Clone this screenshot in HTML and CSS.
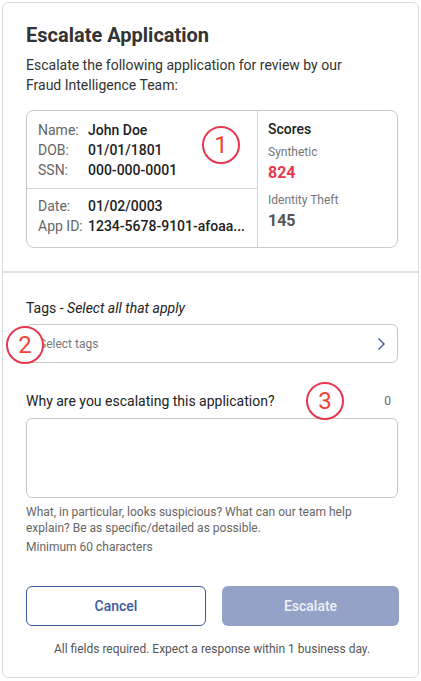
FILE: index.html
```html
<!DOCTYPE html>
<html>
<head>
<meta charset="utf-8">
<link rel="stylesheet" href="styles.css">
</head>
<body>
<div class="card">
  <section class="top">
    <h1 class="title">Escalate Application</h1>
    <p class="subtitle">Escalate the following application for review by our Fraud Intelligence Team:</p>
    <div class="info">
      <div class="info-left">
        <div class="group">
          <div class="row"><span class="lbl">Name:</span><span class="val">John Doe</span></div>
          <div class="row"><span class="lbl">DOB:</span><span class="val">01/01/1801</span></div>
          <div class="row"><span class="lbl">SSN:</span><span class="val">000-000-0001</span></div>
        </div>
        <div class="group group2">
          <div class="row"><span class="lbl">Date:</span><span class="val">01/02/0003</span></div>
          <div class="row"><span class="lbl">App ID:</span><span class="val ellip">1234-5678-9101-afoaa...</span></div>
        </div>
        <span class="mark m1">1</span>
      </div>
      <div class="info-right">
        <div class="scores-title">Scores</div>
        <div class="score-lbl">Synthetic</div>
        <div class="score-val red">824</div>
        <div class="score-lbl">Identity Theft</div>
        <div class="score-val gray">145</div>
      </div>
    </div>
  </section>
  <section class="bottom">
    <div class="field-label">Tags - <em>Select all that apply</em></div>
    <div class="select">
      <span class="placeholder">Select tags</span>
      <svg class="chev" width="10" height="14" viewBox="0 0 10 14"><path d="M2.5 1.5 L8 7 L2.5 12.5" fill="none" stroke="#3d5a9e" stroke-width="1.4"/></svg>
      <span class="mark m2">2</span>
    </div>
    <div class="why-row">
      <span class="field-label nomb">Why are you escalating this application?</span>
      <span class="count">0</span>
      <span class="mark m3">3</span>
    </div>
    <div class="textarea"></div>
    <p class="help">What, in particular, looks suspicious? What can our team help explain? Be as specific/detailed as possible.</p>
    <p class="min">Minimum 60 characters</p>
    <div class="buttons">
      <button class="btn cancel">Cancel</button>
      <button class="btn escalate">Escalate</button>
    </div>
    <p class="footer">All fields required. Expect a response within 1 business day.</p>
  </section>
</div>
</body>
</html>
```
FILE: styles.css
```css
* { box-sizing: border-box; }
html, body { margin: 0; padding: 0; background: #fff; }
body {
  padding: 2px;
  font-family: Roboto, "Liberation Sans", sans-serif;
  color: #333;
}
.card {
  width: 417px;
  height: 676px;
  border: 1px solid #dcdcdc;
  border-radius: 6px;
  display: flex;
  flex-direction: column;
}
.top {
  padding: 20px 20px 23px 23px;
  border-bottom: 2px solid #e2e2e2;
}
.title {
  margin: 0;
  font-size: 20px;
  line-height: 24px;
  font-weight: 700;
  color: #333;
}
.subtitle {
  margin: 8px 0 0;
  font-size: 14px;
  line-height: 20px;
  color: #333;
  width: 340px;
}
.info {
  margin-top: 15px;
  height: 138px;
  border: 1px solid #c9c9c9;
  border-radius: 8px;
  display: flex;
}
.info-left {
  width: 231px;
  border-right: 1px solid #d5d5d5;
  display: flex;
  flex-direction: column;
  position: relative;
}
.group { padding: 9px 0 8px 11px; }
.group2 {
  border-top: 1px solid #d5d5d5;
  padding-top: 7px;
}
.row {
  display: flex;
  font-size: 14px;
  line-height: 20px;
}
.lbl { width: 50px; color: #666; }
.val { color: #222; font-weight: 500; white-space: nowrap; }
.info-right { padding: 9px 0 0 10px; }
.scores-title { font-size: 14px; font-weight: 500; line-height: 18px; color: #222; margin-bottom: 7px; }
.score-lbl { font-size: 12px; color: #777; line-height: 14px; }
.score-val { font-size: 16px; font-weight: 700; line-height: 20px; margin: 4px 0 10px; }
.red { color: #e8384f; }
.gray { color: #555; }
.bottom {
  padding: 26px 20px 0 23px;
  flex: 1;
  display: flex;
  flex-direction: column;
}
.field-label {
  font-size: 14px;
  line-height: 18px;
  color: #222;
  margin-bottom: 7px;
}
.field-label em { font-style: italic; }
.nomb { margin-bottom: 0; }
.select {
  height: 39px;
  border: 1px solid #c9c9c9;
  border-radius: 6px;
  display: flex;
  align-items: center;
  justify-content: space-between;
  padding: 0 11px 0 12px;
  position: relative;
}
.placeholder { font-size: 12px; color: #777; }
.why-row {
  margin-top: 29px;
  display: flex;
  justify-content: space-between;
  align-items: center;
  position: relative;
  padding-right: 7px;
}
.count { font-size: 12px; color: #666; }
.textarea {
  margin-top: 8px;
  height: 80px;
  border: 1px solid #c9c9c9;
  border-radius: 6px;
}
.help {
  margin: 6px 0 0;
  font-size: 12px;
  line-height: 16px;
  color: #666;
  width: 340px;
}
.min {
  margin: 4px 0 0;
  font-size: 12px;
  line-height: 15px;
  color: #666;
}
.buttons {
  margin-top: 31px;
  display: grid;
  grid-template-columns: 180px 177px;
  gap: 16px;
}
.btn {
  height: 40px;
  border-radius: 6px;
  font-family: Roboto, "Liberation Sans", sans-serif;
  font-size: 14px;
  font-weight: 500;
}
.cancel { background: #fff; border: 1px solid #3d5a9e; color: #3d5a9e; }
.escalate { background: #93a2c6; border: none; color: #eef1f8; }
.footer {
  margin: 16px 0 0;
  text-align: center;
  font-size: 12px;
  color: #555;
}
.mark {
  position: absolute;
  width: 38px;
  height: 38px;
  border: 2px solid #e8384f;
  border-radius: 50%;
  color: #f04438;
  font-size: 24px;
  line-height: 34px;
  text-align: center;
  font-weight: 400;
  background: #fff;
}
.m1 { left: 175px; top: 15px; }
.m2 { left: -21px; top: 1px; }
.m3 { left: 280px; top: -10px; }
```
